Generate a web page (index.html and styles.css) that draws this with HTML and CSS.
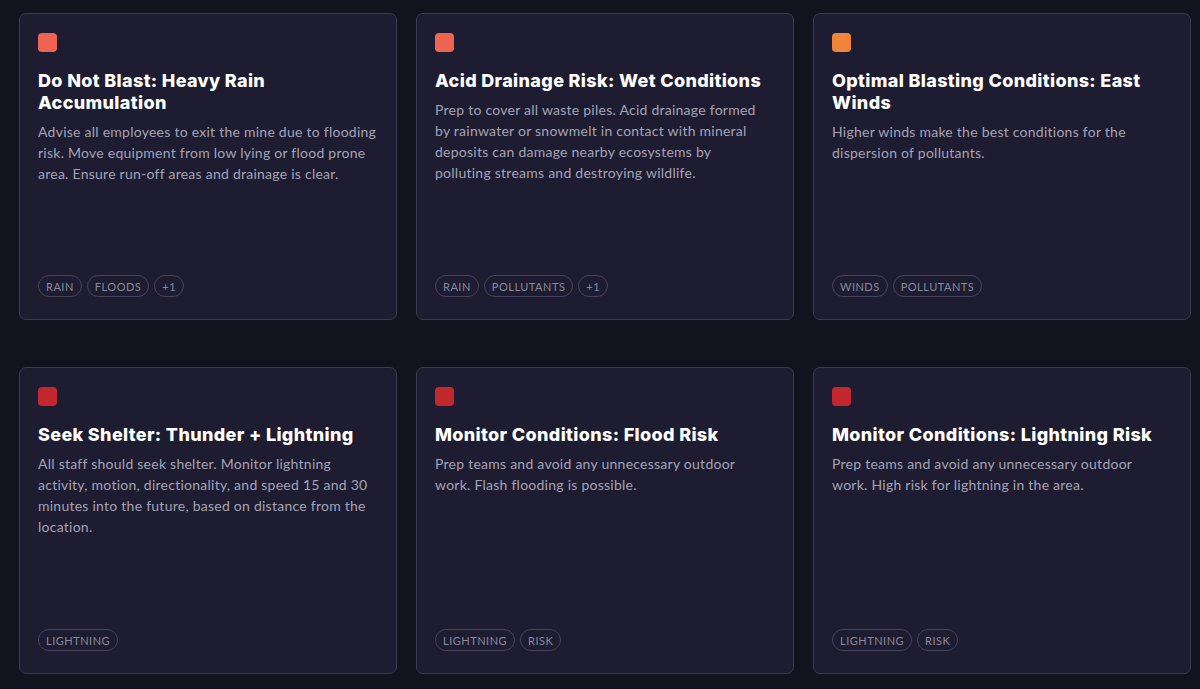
FILE: index.html
```html
<!DOCTYPE html>
<html lang="en">
<head>
<meta charset="utf-8">
<title>Alerts</title>
<link rel="stylesheet" href="styles.css">
</head>
<body>
<main class="grid">
  <article class="card">
    <span class="dot dot-salmon"></span>
    <h2 class="title">Do Not Blast: Heavy Rain Accumulation</h2>
    <p class="desc">Advise all employees to exit the mine due to flooding risk. Move equipment from low lying or flood prone area. Ensure run-off areas and drainage is clear.</p>
    <div class="tags"><span class="tag">RAIN</span><span class="tag">FLOODS</span><span class="tag">+1</span></div>
  </article>
  <article class="card">
    <span class="dot dot-salmon"></span>
    <h2 class="title">Acid Drainage Risk: Wet Conditions</h2>
    <p class="desc">Prep to cover all waste piles. Acid drainage formed by&nbsp;rainwater or snowmelt in contact with mineral deposits can damage nearby ecosystems by polluting&nbsp;streams and destroying wildlife.</p>
    <div class="tags"><span class="tag">RAIN</span><span class="tag">POLLUTANTS</span><span class="tag">+1</span></div>
  </article>
  <article class="card">
    <span class="dot dot-orange"></span>
    <h2 class="title">Optimal Blasting Conditions: East Winds</h2>
    <p class="desc">Higher winds make the best conditions for the dispersion of pollutants.</p>
    <div class="tags"><span class="tag">WINDS</span><span class="tag">POLLUTANTS</span></div>
  </article>
  <article class="card">
    <span class="dot dot-red"></span>
    <h2 class="title">Seek Shelter: Thunder + Lightning</h2>
    <p class="desc">All staff should seek shelter. Monitor lightning activity, motion, directionality, and speed 15 and 30 minutes into the future, based on distance from the location.</p>
    <div class="tags"><span class="tag">LIGHTNING</span></div>
  </article>
  <article class="card">
    <span class="dot dot-red"></span>
    <h2 class="title">Monitor Conditions: Flood Risk</h2>
    <p class="desc">Prep teams and avoid any unnecessary outdoor work.&nbsp;Flash flooding is possible.</p>
    <div class="tags"><span class="tag">LIGHTNING</span><span class="tag">RISK</span></div>
  </article>
  <article class="card">
    <span class="dot dot-red"></span>
    <h2 class="title">Monitor Conditions: Lightning Risk</h2>
    <p class="desc">Prep teams and avoid any unnecessary outdoor work.&nbsp;High risk for lightning in the area.</p>
    <div class="tags"><span class="tag">LIGHTNING</span><span class="tag">RISK</span></div>
  </article>
</main>
</body>
</html>
```
FILE: styles.css
```css
* { box-sizing: border-box; }
html, body {
  margin: 0;
  background: #13121f;
  font-family: Lato, "Noto Sans", sans-serif;
}
.grid {
  display: grid;
  grid-template-columns: repeat(3, 378px);
  grid-auto-rows: 307px;
  column-gap: 19px;
  row-gap: 47px;
  padding: 13px 0 0 19px;
}
.card {
  display: flex;
  flex-direction: column;
  align-items: flex-start;
  background: #1d1c30;
  border: 1px solid #3b3a52;
  border-radius: 7px;
  padding: 19px 18px 22px 18px;
}
.dot {
  width: 19px;
  height: 19px;
  border-radius: 4px;
  flex: none;
}
.dot-salmon { background: #ef6352; }
.dot-orange { background: #f0843a; }
.dot-red { background: #c1272d; }
.title {
  margin: 18px 0 0;
  color: #ffffff;
  font-family: Inter, Lato, sans-serif;
  font-size: 18px;
  font-weight: 800;
  line-height: 22px;
  letter-spacing: 0.35px;
}
.desc {
  margin: 7px 0 0;
  color: #a4a3b6;
  font-size: 14px;
  line-height: 21px;
  letter-spacing: 0.25px;
}
.tags {
  margin-top: auto;
  display: flex;
  gap: 5px;
}
.tag {
  height: 22px;
  display: inline-flex;
  align-items: center;
  padding: 0 7px;
  border: 1px solid #45445c;
  border-radius: 11px;
  color: #8a899d;
  font-size: 11px;
  letter-spacing: 0.5px;
}
```
